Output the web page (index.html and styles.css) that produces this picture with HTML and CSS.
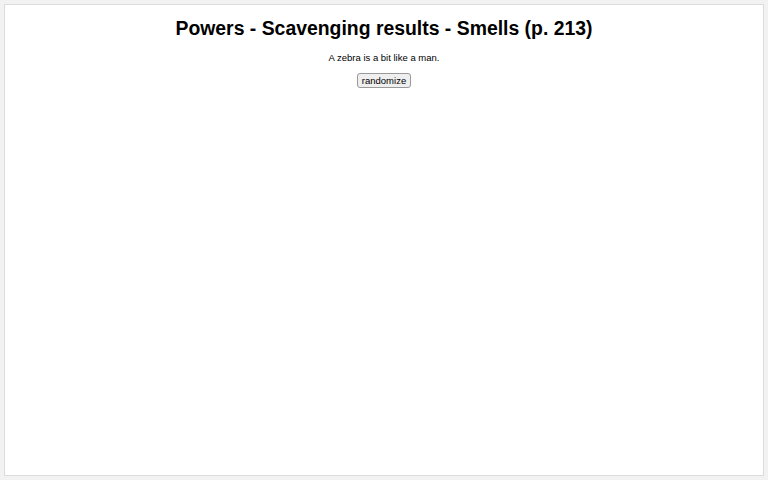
FILE: index.html
```
<!DOCTYPE html>
<html>
<head>
  <title>Powers - Scavenging results - Smells</title>
  <link rel="stylesheet" href="styles.css">
</head>
<body>
  <div class="sheet">
    <h1>Powers - Scavenging results - Smells (p. 213)</h1>
    <p class="result" id="result">A zebra is a bit like a man.</p>
    <button class="roll" id="rollBtn">randomize</button>
  </div>

  <script>
    // Möjliga dofter
    const smells = [
      "A zebra is a bit like a man.",
      "Wet dog and old pennies.",
      "Burnt sugar and rain.",
      "Something long dead under the floor."
    ];

    document.getElementById('rollBtn').addEventListener('click', () => {
      const pick = smells[Math.floor(Math.random() * smells.length)];
      document.getElementById('result').textContent = pick;
    });
  </script>
</body>
</html>
```

FILE: styles.css
```
html, body {
  height: 100%;
}
body {
  font-family: 'Liberation Sans', Arial, sans-serif;
  background: #f2f2f2;
  margin: 0;
  padding: 4px 4px 4px 4px;
  box-sizing: border-box;
  color: #000;
}
.sheet {
  height: 100%;
  box-sizing: border-box;
  background: white;
  border: 1px solid #dcdcdc;
  text-align: center;
  padding-top: 12px;
}
h1 {
  font-size: 19.4px;
  font-weight: bold;
  margin: 0 0 12px 0;
}
.result {
  font-size: 9.5px;
  margin: 0 0 7px 0;
}
.roll {
  font-family: 'Liberation Sans', Arial, sans-serif;
  font-size: 9.5px;
  padding: 1px 4px;
  border: 1px solid #999;
  border-radius: 3px;
  background: #efefef;
  color: #000;
}
```
